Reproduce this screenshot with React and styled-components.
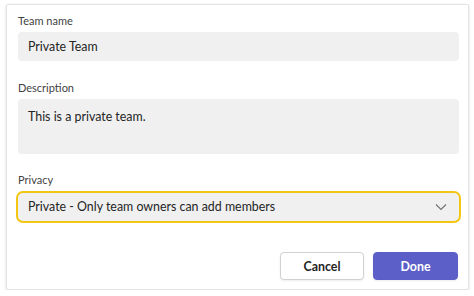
import styled, { createGlobalStyle } from 'styled-components';

const GlobalStyle = createGlobalStyle`
  body {
    margin: 0;
    background: #ffffff;
    font-family: Lato, "Noto Sans", sans-serif;
  }
`;

const Card = styled.div`
  box-sizing: border-box;
  width: 463px;
  height: 286px;
  margin: 4px 0 0 6px;
  padding: 8px 9px 0 11px;
  background: #ffffff;
  border: 1px solid #e3e3e3;
  border-radius: 2px;
  box-shadow: 0 1px 3px rgba(0, 0, 0, 0.14);
  display: flex;
  flex-direction: column;
`;

const Field = styled.div`
  display: flex;
  flex-direction: column;
  gap: 3px;
  margin-bottom: ${({ $gap }) => $gap}px;
`;

const Label = styled.label`
  font-size: 11px;
  line-height: 16px;
  color: #424242;
`;

const Input = styled.div`
  box-sizing: border-box;
  height: ${({ $h }) => $h}px;
  padding: ${({ $multi }) => ($multi ? '8px 10px' : '0 10px')};
  display: flex;
  align-items: ${({ $multi }) => ($multi ? 'flex-start' : 'center')};
  background: #f0f0f0;
  border-radius: 4px;
  font-size: 12.4px;
  line-height: 20px;
  color: #242424;
`;

const Select = styled(Input)`
  justify-content: space-between;
  padding-right: 12px;
  outline: 2px solid #f3c614;
  border-radius: 5px;
  margin-top: 2px;
`;

const Actions = styled.div`
  display: flex;
  justify-content: flex-end;
  gap: 9px;
  margin-top: 31px;
  padding-right: 1px;
`;

const Button = styled.button`
  box-sizing: border-box;
  width: ${({ $w }) => $w}px;
  height: 28px;
  border-radius: 4px;
  font-family: Lato, "Noto Sans", sans-serif;
  font-size: 12.4px;
  font-weight: 700;
  border: 1px solid ${({ $primary }) => ($primary ? '#5b5fc7' : '#d1d1d1')};
  background: ${({ $primary }) => ($primary ? '#5b5fc7' : '#ffffff')};
  color: ${({ $primary }) => ($primary ? '#ffffff' : '#242424')};
  box-shadow: 0 1px 2px rgba(0, 0, 0, 0.08);
`;

const Chevron = () => (
  <svg width="12" height="8" viewBox="0 0 12 8">
    <path d="M1 1.5 L6 6.5 L11 1.5" fill="none" stroke="#707070" strokeWidth="1.1" />
  </svg>
);

const App = () => {
  return (
    <>
      <GlobalStyle />
      <Card>
        <Field $gap={19}>
          <Label>Team name</Label>
          <Input $h={29}>Private Team</Input>
        </Field>
        <Field $gap={18}>
          <Label>Description</Label>
          <Input $h={55} $multi>
            This is a private team.
          </Input>
        </Field>
        <Field $gap={0}>
          <Label>Privacy</Label>
          <Select $h={28}>
            Private - Only team owners can add members
            <Chevron />
          </Select>
        </Field>
        <Actions>
          <Button $w={84}>Cancel</Button>
          <Button $w={85} $primary>
            Done
          </Button>
        </Actions>
      </Card>
    </>
  );
};

export default App;
